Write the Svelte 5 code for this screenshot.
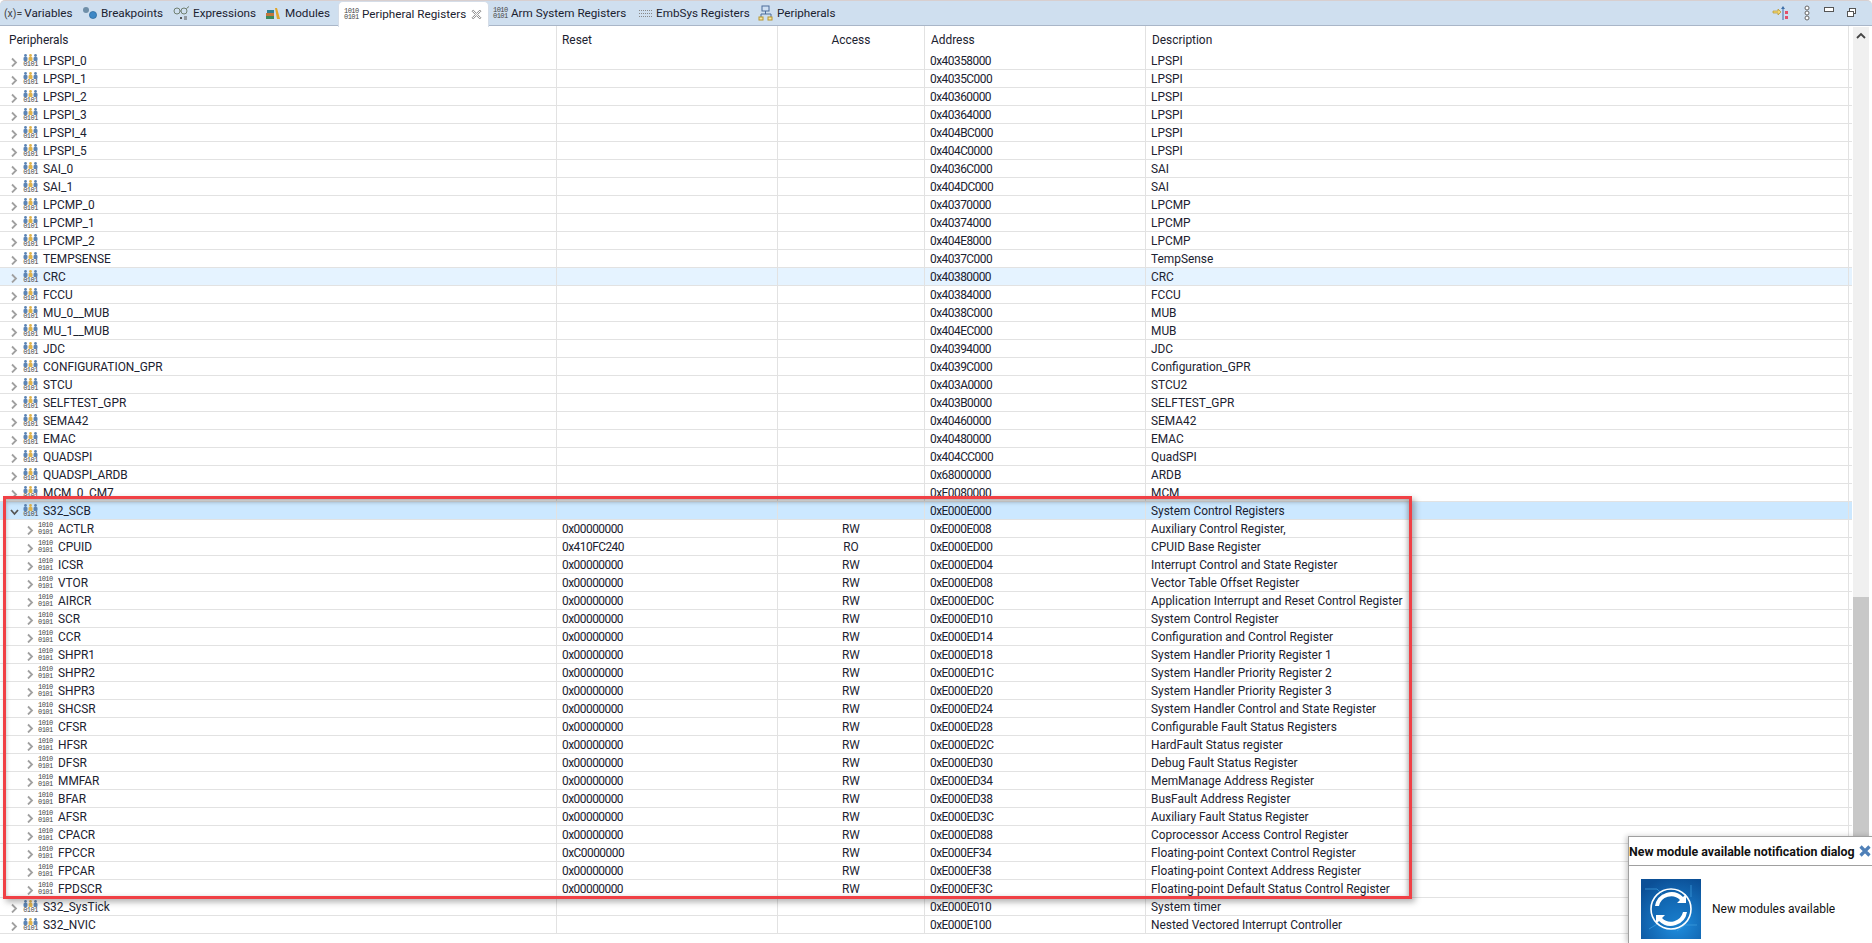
<script>
  const top = [
    ['LPSPI_0','0x40358000','LPSPI'],['LPSPI_1','0x4035C000','LPSPI'],['LPSPI_2','0x40360000','LPSPI'],
    ['LPSPI_3','0x40364000','LPSPI'],['LPSPI_4','0x404BC000','LPSPI'],['LPSPI_5','0x404C0000','LPSPI'],
    ['SAI_0','0x4036C000','SAI'],['SAI_1','0x404DC000','SAI'],['LPCMP_0','0x40370000','LPCMP'],
    ['LPCMP_1','0x40374000','LPCMP'],['LPCMP_2','0x404E8000','LPCMP'],['TEMPSENSE','0x4037C000','TempSense'],
    ['CRC','0x40380000','CRC'],['FCCU','0x40384000','FCCU'],['MU_0__MUB','0x4038C000','MUB'],
    ['MU_1__MUB','0x404EC000','MUB'],['JDC','0x40394000','JDC'],['CONFIGURATION_GPR','0x4039C000','Configuration_GPR'],
    ['STCU','0x403A0000','STCU2'],['SELFTEST_GPR','0x403B0000','SELFTEST_GPR'],['SEMA42','0x40460000','SEMA42'],
    ['EMAC','0x40480000','EMAC'],['QUADSPI','0x404CC000','QuadSPI'],['QUADSPI_ARDB','0x68000000','ARDB'],
    ['MCM_0_CM7','0xE0080000','MCM']
  ];
  const regs = [
    ['ACTLR','0x00000000','RW','0xE000E008','Auxiliary Control Register,'],
    ['CPUID','0x410FC240','RO','0xE000ED00','CPUID Base Register'],
    ['ICSR','0x00000000','RW','0xE000ED04','Interrupt Control and State Register'],
    ['VTOR','0x00000000','RW','0xE000ED08','Vector Table Offset Register'],
    ['AIRCR','0x00000000','RW','0xE000ED0C','Application Interrupt and Reset Control Register'],
    ['SCR','0x00000000','RW','0xE000ED10','System Control Register'],
    ['CCR','0x00000000','RW','0xE000ED14','Configuration and Control Register'],
    ['SHPR1','0x00000000','RW','0xE000ED18','System Handler Priority Register 1'],
    ['SHPR2','0x00000000','RW','0xE000ED1C','System Handler Priority Register 2'],
    ['SHPR3','0x00000000','RW','0xE000ED20','System Handler Priority Register 3'],
    ['SHCSR','0x00000000','RW','0xE000ED24','System Handler Control and State Register'],
    ['CFSR','0x00000000','RW','0xE000ED28','Configurable Fault Status Registers'],
    ['HFSR','0x00000000','RW','0xE000ED2C','HardFault Status register'],
    ['DFSR','0x00000000','RW','0xE000ED30','Debug Fault Status Register'],
    ['MMFAR','0x00000000','RW','0xE000ED34','MemManage Address Register'],
    ['BFAR','0x00000000','RW','0xE000ED38','BusFault Address Register'],
    ['AFSR','0x00000000','RW','0xE000ED3C','Auxiliary Fault Status Register'],
    ['CPACR','0x00000000','RW','0xE000ED88','Coprocessor Access Control Register'],
    ['FPCCR','0xC0000000','RW','0xE000EF34','Floating-point Context Control Register'],
    ['FPCAR','0x00000000','RW','0xE000EF38','Floating-point Context Address Register'],
    ['FPDSCR','0x00000000','RW','0xE000EF3C','Floating-point Default Status Control Register']
  ];
  const bottom = [
    ['S32_SysTick','0xE000E010','System timer'],
    ['S32_NVIC','0xE000E100','Nested Vectored Interrupt Controller']
  ];
</script>

{#snippet chevron(open)}
  <svg class="chev" width="9" height="10" viewBox="0 0 9 10">
    {#if open}
      <path d="M1 3 L4.500 7 L8 3" fill="none" stroke="#555" stroke-width="1.8"/>
    {:else}
      <path d="M2 1.500 L6 5.500 L2 9.500" fill="none" stroke="#a0a0a0" stroke-width="1.8"/>
    {/if}
  </svg>
{/snippet}

{#snippet bits()}
  <span class="bits"><span>1010</span><span>0101</span></span>
{/snippet}

{#snippet periIcon()}
  <span class="peri">
    <svg width="15" height="7" viewBox="0 0 15 7">
      <g fill="#5b84b5"><circle cx="2.500" cy="1.500" r="1.400"/><rect x="0.500" y="3" width="4" height="4" rx="1"/></g>
      <g fill="#e0b24a"><circle cx="7.500" cy="1.500" r="1.400"/><rect x="5.500" y="3" width="4" height="4" rx="1"/></g>
      <g fill="#5b84b5"><circle cx="12.500" cy="1.500" r="1.400"/><rect x="10.500" y="3" width="4" height="4" rx="1"/></g>
    </svg>
    <span class="pbits">0101</span>
  </span>
{/snippet}

<div class="page">
  <div class="tabbar">
    <div class="tab t1"><span class="xeq">(x)=</span><span>Variables</span></div>
    <div class="tab t2">
      <svg width="16" height="16" viewBox="0 0 16 16"><circle cx="4" cy="5" r="3" fill="#6f8fa8"/><circle cx="11" cy="10" r="3.600" fill="#3f88c5" stroke="#1f5f94" stroke-width=".6"/></svg>
      <span>Breakpoints</span>
    </div>
    <div class="tab t3">
      <svg width="18" height="16" viewBox="0 0 18 16" fill="none" stroke="#6f7f70" stroke-width="1"><circle cx="4" cy="6" r="3"/><circle cx="11" cy="6" r="3"/><path d="M7 6h1M13.500 3.500L16 1.500"/><path d="M7 12l2 2M9 12l-2 2M11 12h3M11 14h3" stroke="#555"/></svg>
      <span>Expressions</span>
    </div>
    <div class="tab t4">
      <svg width="16" height="16" viewBox="0 0 16 16"><rect x="1" y="11" width="8" height="3" fill="#3b8a5c"/><rect x="1" y="8" width="8" height="3" fill="#c2763a"/><rect x="2" y="5" width="7" height="3" fill="#2f7f90"/><path d="M10 3l2 0 3 11h-3z" fill="#e0a62c"/></svg>
      <span>Modules</span>
    </div>
    <div class="tab t5 active">
      {@render bits()}
      <span>Peripheral Registers</span>
      <svg class="close" width="11" height="11" viewBox="0 0 10 10" fill="none" stroke="#8a8a8a" stroke-width=".9"><path d="M1 2 L2 1 L5 4 L8 1 L9 2 L6 5 L9 8 L8 9 L5 6 L2 9 L1 8 L4 5Z"/></svg>
    </div>
    <div class="tab t6">{@render bits()}<span>Arm System Registers</span></div>
    <div class="tab t7">
      <svg width="14" height="16" viewBox="0 0 14 16" fill="none" stroke="#888" stroke-width="1" stroke-dasharray="1 1"><path d="M0 5.500h14M0 8.500h14M0 11.500h14"/></svg>
      <span>EmbSys Registers</span>
    </div>
    <div class="tab t8">
      <svg width="16" height="16" viewBox="0 0 16 16" fill="none"><rect x="4" y="1" width="7" height="5" fill="#cfe0f3" stroke="#4d6c9a"/><path d="M7.500 6v3M3 12v-3h10v3" stroke="#4d6c9a"/><rect x="1" y="12" width="4" height="3" fill="#f5e6a8" stroke="#b8952c"/><rect x="10" y="12" width="4" height="3" fill="#f5e6a8" stroke="#b8952c"/></svg>
      <span>Peripherals</span>
    </div>
    <div class="spacer"></div>
    <svg class="tool" width="18" height="16" viewBox="0 0 18 16"><path d="M1 6h5V4l3 3-3 3V8H1z" fill="#f2d774" stroke="#b8952c" stroke-width=".7"/><path d="M11 15V3" stroke="#3f6fa8"/><path d="M9 4l2-3 2 3z" fill="#3f6fa8"/><rect x="13" y="6" width="3" height="3" fill="#e2506b"/><rect x="13" y="11" width="3" height="3" fill="#e2506b"/></svg>
    <svg class="tool dots" width="8" height="16" viewBox="0 0 8 16" fill="#fff" stroke="#666"><circle cx="4" cy="3" r="2"/><circle cx="4" cy="8" r="2"/><circle cx="4" cy="13" r="2"/></svg>
    <svg class="tool min" width="10" height="6" viewBox="0 0 10 6" fill="#fff" stroke="#555"><rect x=".5" y=".5" width="9" height="4"/></svg>
    <svg class="tool max" width="9" height="9" viewBox="0 0 9 9" fill="#fff" stroke="#555"><rect x="2.500" y=".5" width="6" height="5"/><rect x=".5" y="3.500" width="6" height="5"/></svg>
  </div>

  <div class="body">
    <div class="table">
      <div class="row head">
        <div class="c c1">Peripherals</div>
        <div class="c c2">Reset</div>
        <div class="c c3">Access</div>
        <div class="c c4 plain">Address</div>
        <div class="c c5">Description</div>
      </div>
      {#each top as r}
        <div class="row" class:hover={r[0] === 'CRC'}>
          <div class="c c1">{@render chevron(false)}{@render periIcon()}<span class="name">{r[0]}</span></div>
          <div class="c c2"></div><div class="c c3"></div>
          <div class="c c4">{r[1]}</div><div class="c c5">{r[2]}</div>
        </div>
      {/each}
      <div class="row sel">
        <div class="c c1">{@render chevron(true)}{@render periIcon()}<span class="name">S32_SCB</span></div>
        <div class="c c2"></div><div class="c c3"></div>
        <div class="c c4">0xE000E000</div><div class="c c5">System Control Registers</div>
      </div>
      {#each regs as r}
        <div class="row">
          <div class="c c1 sub">{@render chevron(false)}{@render bits()}<span class="name">{r[0]}</span></div>
          <div class="c c2 hex">{r[1]}</div><div class="c c3">{r[2]}</div>
          <div class="c c4">{r[3]}</div><div class="c c5">{r[4]}</div>
        </div>
      {/each}
      {#each bottom as r}
        <div class="row">
          <div class="c c1">{@render chevron(false)}{@render periIcon()}<span class="name">{r[0]}</span></div>
          <div class="c c2"></div><div class="c c3"></div>
          <div class="c c4">{r[1]}</div><div class="c c5">{r[2]}</div>
        </div>
      {/each}
      <div class="redbox"></div>
    </div>
    <div class="scroll">
      <div class="sbtn"><svg width="10" height="7" viewBox="0 0 10 7"><path d="M1 6 L5 2 L9 6" fill="none" stroke="#444" stroke-width="1.8"/></svg></div>
      <div class="thumb"></div>
    </div>
  </div>

  <div class="notice">
    <div class="ntitle"><b>New module available notification dialog</b>
      <svg width="12" height="12" viewBox="0 0 12 12"><path d="M1.500 1.500 L10.500 10.500 M10.500 1.500 L1.500 10.500" stroke="#4f80b8" stroke-width="3.200"/></svg>
    </div>
    <div class="nbody">
      <div class="nimg">
        <svg width="60" height="60" viewBox="0 0 60 60">
          <defs><radialGradient id="g" cx=".6" cy=".75" r=".8"><stop offset="0" stop-color="#1f8fe0"/><stop offset="1" stop-color="#0b4f96"/></radialGradient></defs>
          <rect width="60" height="60" fill="url(#g)"/>
          <path d="M4 10h12l8 8M56 46H44l-8 6M50 6v12M8 50l10-6" fill="none" stroke="#3f9fe0" stroke-width="1" opacity=".7"/>
          <circle cx="30" cy="30" r="20" fill="#0d5fa8" fill-opacity=".35" stroke="#fff" stroke-width="1.600"/>
          <path d="M18 27a12.500 12.500 0 0 1 21-6l-3 3h9v-9l-3 3a16.500 16.500 0 0 0-28 9z" fill="#fff"/>
          <path d="M42 33a12.500 12.500 0 0 1-21 6l3-3h-9v9l3-3a16.500 16.500 0 0 0 28-9z" fill="#fff"/>
        </svg>
      </div>
      <span>New modules available</span>
    </div>
  </div>
</div>

<style>
  :global(body) { margin: 0; background: #fff; overflow: hidden; }
  .page { width: 1872px; height: 943px; position: relative; overflow: hidden; display: flex; flex-direction: column;
    font-family: Roboto, "Open Sans", sans-serif; font-size: 11.9px; color: #1b2230; background: #fff; }
  .tabbar { height: 24px; display: flex; align-items: center; background: #cfdfef; border-bottom: 1px solid #a9b6c8;
    border-top: 1px solid #d8cfcf; padding: 0 16px 0 4px; box-sizing: content-box; flex: none; border-radius: 5px 5px 0 0; }
  .tab { display: flex; align-items: center; gap: 3px; height: 100%; white-space: nowrap; flex: none; box-sizing: border-box; font-size: 11.7px; }
  .t1 { width: 78px; gap: 2px; }
  .t2 { width: 91px; }
  .t3 { width: 92px; gap: 2px; }
  .t4 { width: 73px; gap: 4px; }
  .t5 { width: 151px; margin-right: 4px; }
  .t6 { width: 146px; }
  .t7 { width: 119px; }
  .t8 { width: 80px; }
  .tab.active { background: #fff; border-radius: 5px 5px 0 0; padding: 0 6px 0 5px; height: 26px; margin-top: 1px;
    border: 1px solid #d5dde8; border-bottom: none; }
  .xeq { font-size: 10.5px; color: #444; }
  .bits { display: inline-flex; flex-direction: column; font-family: "Liberation Mono", monospace; font-size: 7px; line-height: 6.500px; color: #444; letter-spacing: -.55px; width: 15px; flex: none; }
  .close { margin-left: auto; }
  .spacer { flex: 1; }
  .tool { flex: none; }
  .dots { margin-left: 13px; }
  .min { margin-left: 13px; margin-bottom: 6px; }
  .max { margin-left: 13px; margin-bottom: 2px; }
  .body { flex: 1; display: flex; min-height: 0; }
  .table { width: 1852px; position: relative; flex: none; }
  .row { display: grid; grid-template-columns: 557px 221px 147px 221px 703px; height: 18px; box-sizing: border-box;
    border-bottom: 1px solid #e2e2e2; }
  .row.head { height: 26px; border-bottom: none; }
  .row.hover { background: #e5f3ff; }
  .row.sel { background: #cce8ff; }
  .c { border-right: 1px solid #e2e2e2; display: flex; align-items: center; padding: 1px 0 0 5px; box-sizing: border-box; white-space: nowrap; line-height: 16px; min-width: 0; height: 17px; }
  .head .c { height: 26px; }
  .c1 { padding-left: 10px; }
  .head .c1 { padding-left: 9px; }
  .c1.sub { padding-left: 26px; }
  .c3 { justify-content: center; padding-left: 0; }
  .c4, .hex { letter-spacing: -.5px; }
  .head .c4 { letter-spacing: 0; }
  .head .c4, .head .c5 { padding-left: 6px; }
  .chev { flex: none; margin-right: 3px; margin-top: 1px; }
  .peri { display: inline-flex; flex-direction: column; align-items: center; width: 15px; line-height: 7px; flex: none; margin: -2px 0 0 1px; }
  .pbits { font-family: "Liberation Mono", monospace; font-size: 7px; line-height: 6px; color: #444; letter-spacing: -.55px; }
  .sub .bits { margin-top: -1px; }
  .name { margin-left: 5px; }
  .redbox { position: absolute; left: 3px; top: 470px; width: 1409px; height: 403px; box-sizing: border-box; border: 3px solid #f04045;
    box-shadow: 3px 3px 6px rgba(60,60,60,.4), inset 0 3px 4px rgba(60,60,60,.35), inset -3px 0 4px rgba(60,60,60,.15); pointer-events: none; }
  .scroll { width: 16px; margin: 1px 0 0 1px; background: #f0f0f0; flex: none; position: relative; height: 890px; }
  .sbtn { height: 17px; display: flex; align-items: center; justify-content: center; }
  .thumb { position: absolute; top: 570px; left: 0; right: 0; bottom: 0; background: #c8c8c8; }
  .notice { position: absolute; left: 1628px; top: 836px; width: 244px; height: 107px; background: #fff; border: 1px solid #a0a0a0; border-right: none; border-bottom: none;
    box-shadow: -2px 0 5px rgba(0,0,0,.2); color: #111; box-sizing: border-box; }
  .ntitle { height: 29px; border-bottom: 1px solid #a0a0a0; display: flex; align-items: center; justify-content: space-between; padding: 0 1px 0 0; font-size: 12.4px; white-space: nowrap; box-sizing: border-box; }
  .nbody { display: flex; align-items: center; gap: 11px; padding: 13px 0 0 12px; font-size: 12px; }
  .nimg { width: 60px; height: 60px; }
</style>
